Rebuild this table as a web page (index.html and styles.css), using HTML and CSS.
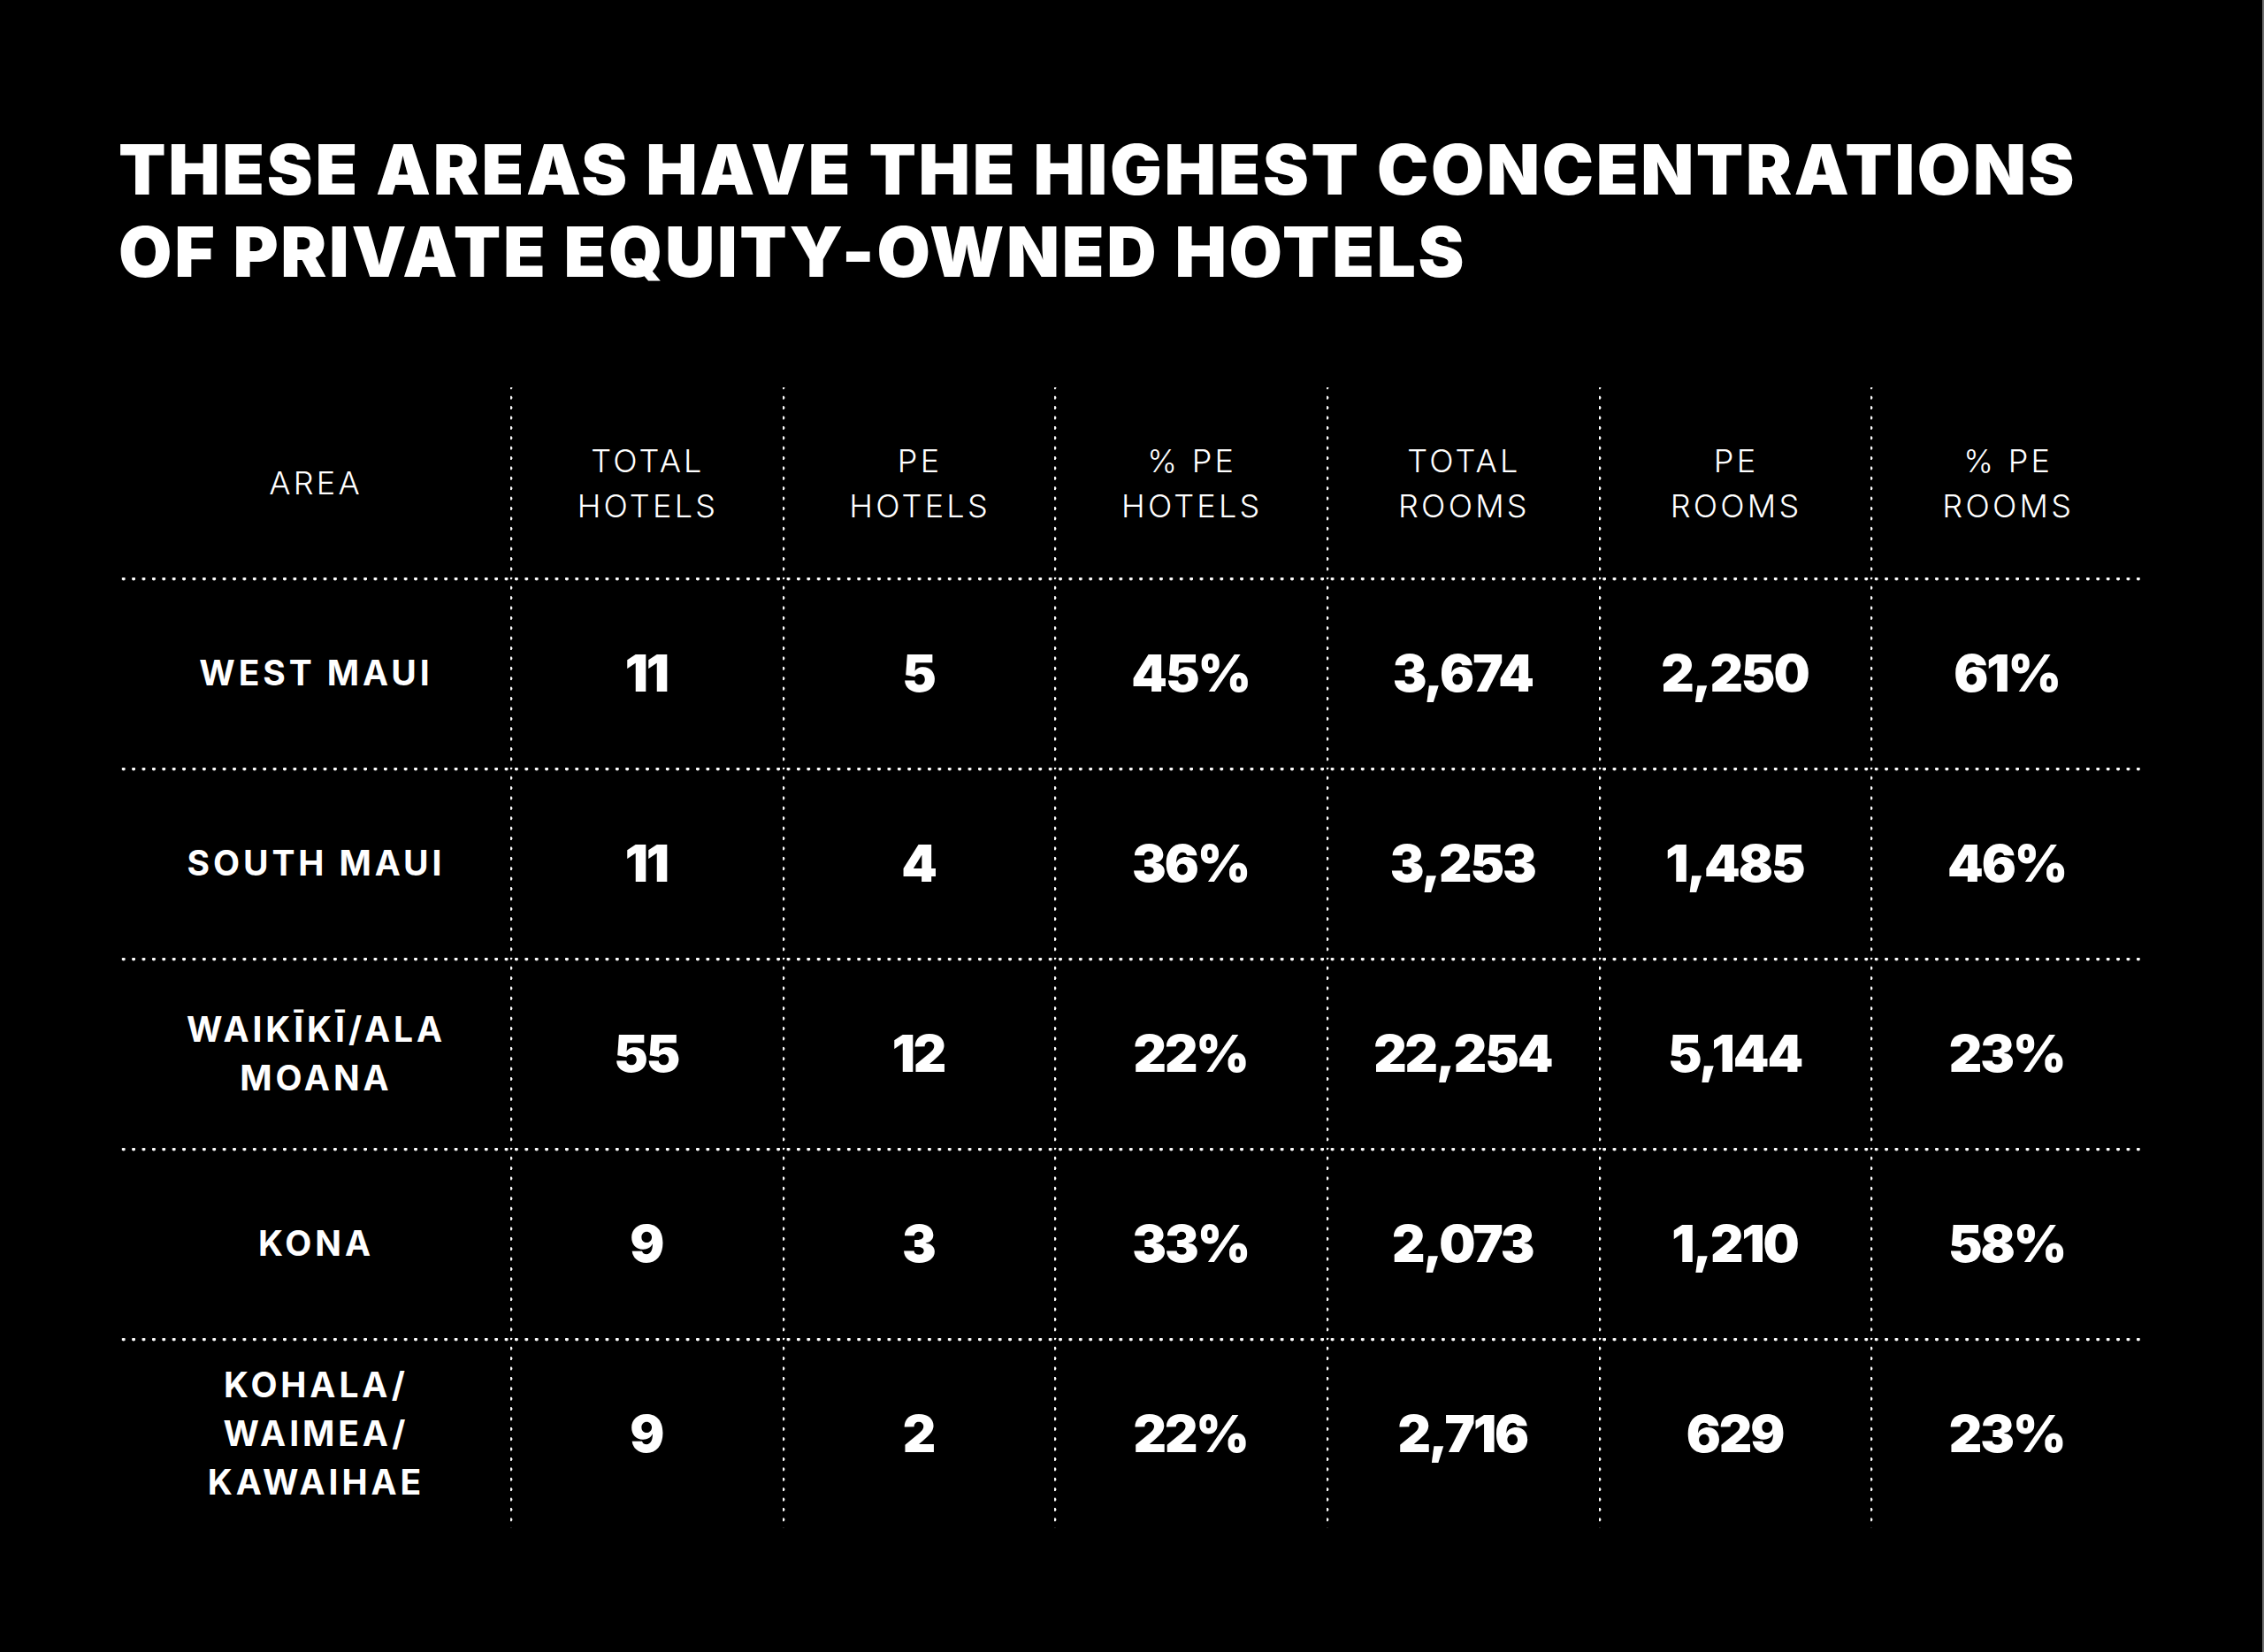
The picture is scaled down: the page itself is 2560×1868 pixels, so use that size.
FILE: index.html
```html
<!DOCTYPE html>
<html lang="en">
<head>
<meta charset="utf-8">
<title>PE-owned hotels by area</title>
<link rel="stylesheet" href="styles.css">
</head>
<body>
<main class="page">
  <h1 class="title">THESE AREAS HAVE THE HIGHEST CONCENTRATIONS<br>OF PRIVATE EQUITY-OWNED HOTELS</h1>
  <div class="table">
    <div class="row head">
      <div class="cell">AREA</div>
      <div class="cell">TOTAL<br>HOTELS</div>
      <div class="cell">PE<br>HOTELS</div>
      <div class="cell">% PE<br>HOTELS</div>
      <div class="cell">TOTAL<br>ROOMS</div>
      <div class="cell">PE<br>ROOMS</div>
      <div class="cell">% PE<br>ROOMS</div>
    </div>
    <div class="row">
      <div class="cell area">WEST MAUI</div>
      <div class="cell num">11</div>
      <div class="cell num">5</div>
      <div class="cell num">45%</div>
      <div class="cell num">3,674</div>
      <div class="cell num">2,250</div>
      <div class="cell num">61%</div>
    </div>
    <div class="row">
      <div class="cell area">SOUTH MAUI</div>
      <div class="cell num">11</div>
      <div class="cell num">4</div>
      <div class="cell num">36%</div>
      <div class="cell num">3,253</div>
      <div class="cell num">1,485</div>
      <div class="cell num">46%</div>
    </div>
    <div class="row">
      <div class="cell area">WAIKĪKĪ/ALA<br>MOANA</div>
      <div class="cell num">55</div>
      <div class="cell num">12</div>
      <div class="cell num">22%</div>
      <div class="cell num">22,254</div>
      <div class="cell num">5,144</div>
      <div class="cell num">23%</div>
    </div>
    <div class="row">
      <div class="cell area">KONA</div>
      <div class="cell num">9</div>
      <div class="cell num">3</div>
      <div class="cell num">33%</div>
      <div class="cell num">2,073</div>
      <div class="cell num">1,210</div>
      <div class="cell num">58%</div>
    </div>
    <div class="row">
      <div class="cell area">KOHALA/<br>WAIMEA/<br>KAWAIHAE</div>
      <div class="cell num">9</div>
      <div class="cell num">2</div>
      <div class="cell num">22%</div>
      <div class="cell num">2,716</div>
      <div class="cell num">629</div>
      <div class="cell num">23%</div>
    </div>
  </div>
</main>
</body>
</html>
```

FILE: styles.css
```css
html, body {
  margin: 0;
  padding: 0;
  background: #000;
}

body {
  width: 2560px;
  height: 1868px;
  overflow: hidden;
  color: #fff;
  font-family: "Inter", "Liberation Sans", sans-serif;
  box-sizing: border-box;
  border-right: 2px solid #6e6e6e;
}

.page {
  padding: 145px 0 0 134px;
}

.title {
  margin: 0;
  font-family: "Inter", "Liberation Sans", sans-serif;
  font-weight: 900;
  font-size: 78px;
  line-height: 93px;
  letter-spacing: 0.034em;
  color: #fff;
}

.table {
  margin-top: 107px;
  width: 2289px;
}

.row {
  display: grid;
  grid-template-columns: 443px repeat(6, 1fr);
  height: 215px;
  background-image: radial-gradient(circle, #fff 1.6px, rgba(255,255,255,0) 2.3px);
  background-size: 11.4px 5px;
  background-repeat: repeat-x;
  background-position: 0 -1px;
}

.row.head {
  background-image: none;
}

.cell {
  display: flex;
  align-items: center;
  justify-content: center;
  text-align: center;
  background-image: radial-gradient(circle, #fff 1.6px, rgba(255,255,255,0) 2.3px);
  background-size: 5px 11.4px;
  background-repeat: repeat-y;
  background-position: -2px 6px;
}

.cell:first-child {
  background-image: none;
}

.head .cell {
  font-weight: 300;
  font-size: 36px;
  line-height: 51px;
  letter-spacing: 0.09em;
  padding-left: 0.09em;
  padding-top: 2px;
}

.area {
  font-weight: 700;
  font-size: 39px;
  line-height: 55px;
  letter-spacing: 0.1em;
  padding-left: 0.1em;
}

.num {
  font-weight: 900;
  font-size: 58px;
  letter-spacing: -0.035em;
}
```
